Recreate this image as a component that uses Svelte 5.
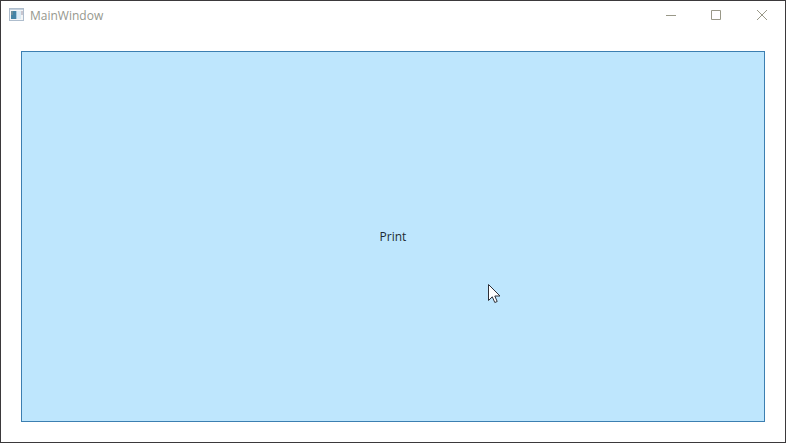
<script>
    let title = "MainWindow";
    let printed = $state(0);

    const handlePrint = () => {
        printed += 1;
    };
</script>

<div class="window">
    <header class="title_bar">
        <svg class="app_icon" width="16" height="16" viewBox="0 0 16 16" shape-rendering="crispEdges" aria-hidden="true">
            <rect x="0" y="1" width="15" height="13" fill="#aebdcd" />
            <rect x="1" y="2" width="13" height="1" fill="#c3cfdc" />
            <rect x="1" y="3" width="13" height="10" fill="#f4f5f6" />
            <rect x="2" y="4" width="5" height="8" fill="#4484a5" />
            <rect x="2" y="4" width="2" height="4" fill="#6b8f9c" />
            <rect x="7" y="4" width="1" height="8" fill="#a9c9dc" />
            <rect x="8" y="4" width="4" height="8" fill="#dcebf4" />
            <rect x="12" y="4" width="2" height="4" fill="#c9c6cf" />
        </svg>
        <h1 class="title">{title}</h1>

        <div class="controls">
            <button class="control" aria-label="Minimize">
                <svg width="12" height="12" viewBox="0 0 12 12" aria-hidden="true">
                    <path d="M2 6.5H12" />
                </svg>
            </button>
            <button class="control" aria-label="Maximize">
                <svg width="12" height="12" viewBox="0 0 12 12" aria-hidden="true">
                    <path d="M1.5 1.5H10.5V10.5H1.5Z" />
                </svg>
            </button>
            <button class="control" aria-label="Close">
                <svg width="12" height="12" viewBox="0 0 12 12" aria-hidden="true">
                    <path d="M1 1L11 11M11 1L1 11" />
                </svg>
            </button>
        </div>
    </header>

    <main class="content">
        <button class="print_button" onclick={handlePrint}>Print</button>
    </main>

    <svg class="pointer" width="13" height="20" viewBox="0 0 13 20" aria-hidden="true">
        <path d="M0.5 0.5V16.5L4.3 12.8L6.8 18.5L9.2 17.5L6.8 12H12Z" />
    </svg>
</div>

<style>
    :global(body) {
        margin: 0;
    }

    .window {
        box-sizing: border-box;
        min-height: 100vh;
        display: flex;
        flex-direction: column;
        position: relative;
        border: 1px solid #3b393b;
        background: white;
        font-family: "Open Sans", "Noto Sans", sans-serif;
        font-size: 12px;
    }

    .title_bar {
        display: flex;
        align-items: center;
        height: 28px;
        padding-left: 8px;
        padding-bottom: 2px;
        gap: 5px;
    }

    .title {
        margin: 0;
        padding-top: 2px;
        font-size: 12px;
        line-height: 16px;
        font-weight: normal;
        color: #96988e;
    }

    .controls {
        display: flex;
        margin-left: auto;
    }

    .control {
        display: flex;
        align-items: center;
        justify-content: center;
        width: 46px;
        height: 28px;
        padding: 0;
        border: none;
        background: transparent;
    }

    .control:hover {
        background: #e5e5e5;
    }

    .control path {
        fill: none;
        stroke: #999888;
    }

    .content {
        flex: 1;
        display: flex;
        padding: 20px;
    }

    .print_button {
        flex: 1;
        padding: 0;
        border: 1px solid #3c7fb1;
        background: #bee6fd;
        color: #1c2a33;
        font: inherit;
    }

    /* mouse pointer lies over the button */
    .pointer {
        position: absolute;
        left: 487px;
        top: 283px;
    }

    .pointer path {
        fill: white;
        stroke: #2e3038;
    }
</style>
